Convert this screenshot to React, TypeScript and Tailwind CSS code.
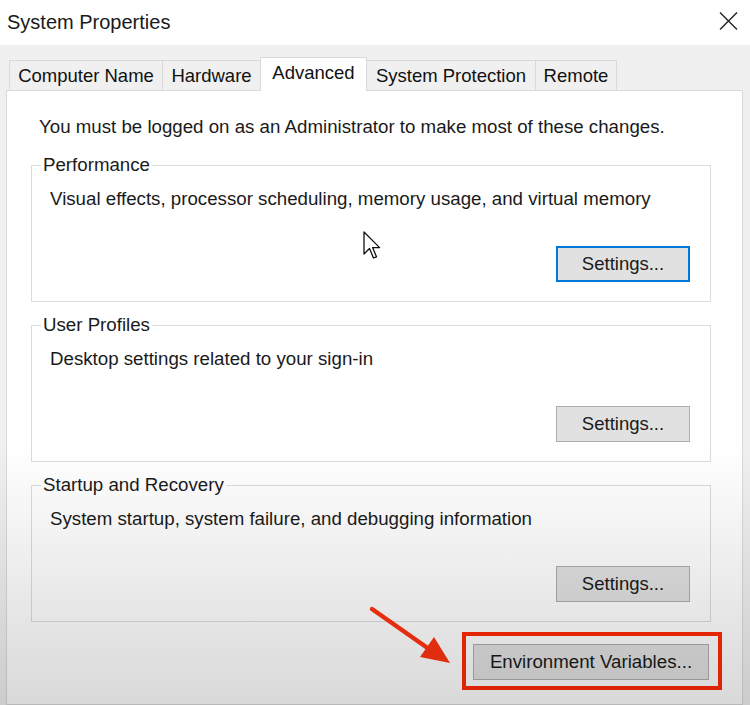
import React from 'react';

const tabs = [
  { label: 'Computer Name', width: 'w-[154px]', active: false },
  { label: 'Hardware', width: 'w-[99px]', active: false },
  { label: 'Advanced', width: 'w-[107px]', active: true },
  { label: 'System Protection', width: 'w-[170px]', active: false },
  { label: 'Remote', width: 'w-[82px]', active: false },
];

const groups = [
  {
    title: 'Performance',
    text: 'Visual effects, processor scheduling, memory usage, and virtual memory',
    focused: true,
  },
  { title: 'User Profiles', text: 'Desktop settings related to your sign-in', focused: false },
  {
    title: 'Startup and Recovery',
    text: 'System startup, system failure, and debugging information',
    focused: false,
  },
];

const SettingsButton: React.FC<{ focused: boolean }> = ({ focused }) => (
  <button
    className={
      focused
        ? 'self-end w-[134px] h-[36px] border-2 border-[#0078d7] bg-[#e1e1e1] text-[18.5px] text-[#1a1a1a]'
        : 'self-end w-[134px] h-[36px] border border-[#adadad] bg-[#e1e1e1] text-[18.5px] text-[#1a1a1a]'
    }
  >
    Settings...
  </button>
);

const App: React.FC = () => {
  return (
    <div className="relative w-[750px] h-[705px] overflow-hidden bg-[#f0f0f0] font-['Liberation_Sans',Arial,sans-serif] text-[#1a1a1a] flex flex-col">
      {/* title bar */}
      <div className="h-[45px] bg-white flex items-center justify-between pl-[7px] pr-[12px] shrink-0">
        <h1 className="text-[20px] leading-[24px] text-[#1a1a1a] -mt-[2px]">System Properties</h1>
        <svg width="19" height="18" viewBox="0 0 19 18" className="-mt-[4px]">
          <path d="M1 0.5 L18 17.5 M18 0.5 L1 17.5" stroke="#222" strokeWidth="1.4" fill="none" />
        </svg>
      </div>

      <div className="flex-1 flex flex-col pl-[6px] pr-[7px] pt-[12px]">
        {/* tabs */}
        <div className="flex items-end pl-[3px] h-[33px] shrink-0">
          {tabs.map((t, i) =>
            t.active ? (
              <div
                key={t.label}
                className={`${t.width} h-[34px] -mb-px -ml-px relative z-10 bg-white border border-b-0 border-[#d9d9d9] flex items-center justify-center pb-[3px] text-[18.5px] text-[#111]`}
              >
                {t.label}
              </div>
            ) : (
              <div
                key={t.label}
                className={`${t.width} h-[30px] ${i === 0 ? '' : '-ml-px'} bg-[#f0f0f0] border border-b-0 border-[#d9d9d9] flex items-center justify-center text-[18.5px] text-[#111]`}
              >
                {t.label}
              </div>
            )
          )}
        </div>

        {/* tab page */}
        <div className="flex-1 bg-white border border-[#d9d9d9] pl-[24px] pr-[31px] pt-[25px] flex flex-col">
          <p className="ml-[8px] text-[18.7px] leading-[22px]">
            You must be logged on as an Administrator to make most of these changes.
          </p>

          <div className="mt-[16px] flex flex-col gap-[12px]">
            {groups.map((g) => (
              <fieldset
                key={g.title}
                className="h-[148px] border border-[#dcdcdc] pl-[9px] pr-[20px] flex flex-col"
              >
                <legend className="px-[2px] text-[18.7px] leading-[22px]">{g.title}</legend>
                <p className="ml-[9px] mt-[12px] text-[18.7px] leading-[22px]">{g.text}</p>
                <div className="mt-[36px] flex justify-end">
                  <SettingsButton focused={g.focused} />
                </div>
              </fieldset>
            ))}
          </div>

          <div className="mt-[10px] flex justify-end -mr-[11px]">
            <div className="border-4 border-[#ff2a05] pl-[7px] pr-[9px] pt-[8px] pb-[6px]">
              <button className="w-[236px] h-[36px] border border-[#adadad] bg-[#e1e1e1] text-[18.7px] text-[#1a1a1a]">
                Environment Variables...
              </button>
            </div>
          </div>
        </div>
      </div>

      {/* mouse pointer */}
      <svg className="absolute left-[363px] top-[231px]" width="19" height="30" viewBox="0 0 19 30">
        <path
          d="M1 1 L1 23 L6.5 17.5 L10.5 27 L13.5 25.8 L9.6 16.6 L16.6 16.6 Z"
          fill="white"
          stroke="#111"
          strokeWidth="1.3"
          strokeLinejoin="round"
        />
      </svg>

      {/* red annotation arrow */}
      <svg className="absolute left-[365px] top-[600px]" width="95" height="70" viewBox="0 0 95 70">
        <line x1="7" y1="9" x2="64" y2="49" stroke="#ff3311" strokeWidth="4.5" strokeLinecap="round" />
        <polygon points="85,63 55,57 69,37" fill="#ff3311" />
      </svg>

      {/* video vignette toward the bottom */}
      <div className="pointer-events-none absolute inset-x-0 bottom-0 h-[260px] bg-gradient-to-b from-transparent to-black/[0.15]" />
    </div>
  );
};

export default App;
